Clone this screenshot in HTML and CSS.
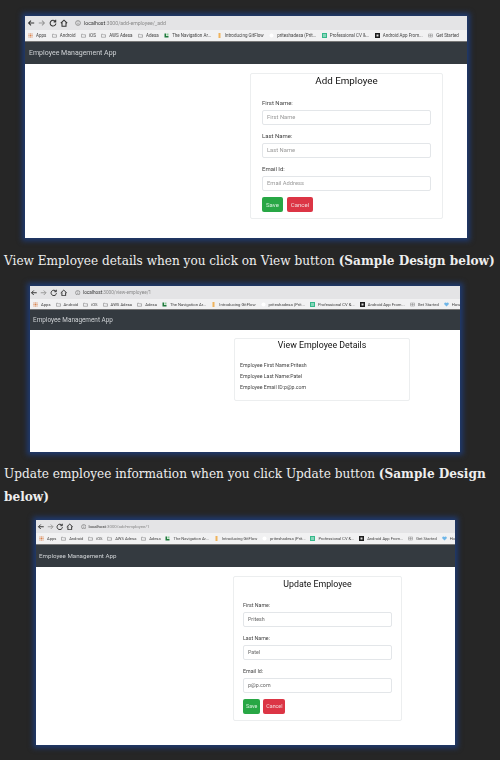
FILE: index.html
```html
<!DOCTYPE html>
<html lang="en">
<head>
  <meta charset="UTF-8">
  <title>Employee Management App</title>
  <link rel="stylesheet" href="styles.css">
</head>
<body>

  <svg class="defs" width="0" height="0">
    <symbol id="back" viewBox="0 0 10 10"><path d="M9 5H2M5 2L2 5l3 3" fill="none" stroke="currentColor" stroke-width="1.3"/></symbol>
    <symbol id="forward" viewBox="0 0 10 10"><path d="M1 5h7M5 2l3 3-3 3" fill="none" stroke="currentColor" stroke-width="1.3"/></symbol>
    <symbol id="reload" viewBox="0 0 10 10"><path d="M8 3.2A3.6 3.6 0 1 0 8.6 5.6M8.4 1v2.6H5.8" fill="none" stroke="currentColor" stroke-width="1.3"/></symbol>
    <symbol id="home" viewBox="0 0 10 10"><path d="M1 5.2L5 1.5l4 3.7M2.5 4.5V9h5V4.5" fill="none" stroke="currentColor" stroke-width="1.3"/></symbol>
    <symbol id="info" viewBox="0 0 10 10"><circle cx="5" cy="5" r="4" fill="none" stroke="currentColor"/><path d="M5 4.5v3M5 2.5v1" stroke="currentColor"/></symbol>
    <symbol id="apps" viewBox="0 0 10 10"><path d="M1 1h2v2H1zM4 1h2v2H4zM7 1h2v2H7zM1 4h2v2H1zM4 4h2v2H4zM7 4h2v2H7zM1 7h2v2H1zM4 7h2v2H4zM7 7h2v2H7z" fill="#d9814a"/></symbol>
    <symbol id="folder" viewBox="0 0 10 10"><path d="M1 2.5h3l1 1h4v5H1z" fill="none" stroke="#666" stroke-width="0.9"/></symbol>
    <symbol id="nav" viewBox="0 0 10 10"><path d="M1 1h3v5h5v3H1z" fill="#1f7a3c"/><path d="M5 1h4v4H5z" fill="#8ccf9b"/></symbol>
    <symbol id="flow" viewBox="0 0 10 10"><path d="M3 0h4v10H3z" fill="#efb35c"/></symbol>
    <symbol id="dot" viewBox="0 0 10 10"><circle cx="5" cy="5" r="4" fill="#fff"/></symbol>
    <symbol id="cv" viewBox="0 0 10 10"><path d="M0 0h10v10H0z" fill="#35b88a"/><path d="M2 3h6M2 5h6M2 7h6" stroke="#d8f3e8"/></symbol>
    <symbol id="app" viewBox="0 0 10 10"><path d="M0 0h10v10H0z" fill="#1d1d1d"/><path d="M3 3h4v4H3z" fill="#ddd"/></symbol>
    <symbol id="grid" viewBox="0 0 10 10"><path d="M1 2h8v6H1zM1 5h8M5 2v6" fill="none" stroke="#777" stroke-width="0.8"/></symbol>
    <symbol id="heart" viewBox="0 0 10 10"><path d="M5 9L1 5a2.4 2.4 0 0 1 4-3 2.4 2.4 0 0 1 4 3z" fill="#6fb6e8"/></symbol>
  </svg>

  <section class="shot shot-add">
    <div class="browser">
      <div class="toolbar">
        <svg class="tool"><use href="#back"/></svg>
        <svg class="tool muted"><use href="#forward"/></svg>
        <svg class="tool"><use href="#reload"/></svg>
        <svg class="tool"><use href="#home"/></svg>
        <svg class="tool info"><use href="#info"/></svg>
        <span class="url">localhost<span class="url-rest">:3000/add-employee/_add</span></span>
      </div>
      <div class="bookmarks">
        <span class="mark"><svg><use href="#apps"/></svg>Apps</span>
        <span class="mark"><svg><use href="#folder"/></svg>Android</span>
        <span class="mark"><svg><use href="#folder"/></svg>iOS</span>
        <span class="mark"><svg><use href="#folder"/></svg>AWS Adesa</span>
        <span class="mark"><svg><use href="#folder"/></svg>Adesa</span>
        <span class="mark"><svg><use href="#nav"/></svg>The Navigation Ar...</span>
        <span class="mark"><svg><use href="#flow"/></svg>Introducing GitFlow</span>
        <span class="mark"><svg><use href="#dot"/></svg>priteshadesa (Prit...</span>
        <span class="mark"><svg><use href="#cv"/></svg>Professional CV &amp;...</span>
        <span class="mark"><svg><use href="#app"/></svg>Android App From...</span>
        <span class="mark"><svg><use href="#grid"/></svg>Get Started</span>
      </div>
    </div>
    <div class="navbar">Employee Management App</div>
    <div class="page">
      <div class="card form-card">
        <h3>Add Employee</h3>
        <label>First Name:</label>
        <div class="input placeholder">First Name</div>
        <label>Last Name:</label>
        <div class="input placeholder">Last Name</div>
        <label>Email Id:</label>
        <div class="input placeholder">Email Address</div>
        <div class="actions">
          <span class="btn btn-save">Save</span>
          <span class="btn btn-cancel">Cancel</span>
        </div>
      </div>
    </div>
  </section>

  <p class="caption caption-view">View Employee details when you click on View button <strong>(Sample Design below)</strong></p>

  <section class="shot shot-view">
    <div class="browser">
      <div class="toolbar">
        <svg class="tool"><use href="#back"/></svg>
        <svg class="tool muted"><use href="#forward"/></svg>
        <svg class="tool"><use href="#reload"/></svg>
        <svg class="tool"><use href="#home"/></svg>
        <svg class="tool info"><use href="#info"/></svg>
        <span class="url">localhost<span class="url-rest">:3000/view-employee/1</span></span>
      </div>
      <div class="bookmarks">
        <span class="mark"><svg><use href="#apps"/></svg>Apps</span>
        <span class="mark"><svg><use href="#folder"/></svg>Android</span>
        <span class="mark"><svg><use href="#folder"/></svg>iOS</span>
        <span class="mark"><svg><use href="#folder"/></svg>AWS Adesa</span>
        <span class="mark"><svg><use href="#folder"/></svg>Adesa</span>
        <span class="mark"><svg><use href="#nav"/></svg>The Navigation Ar...</span>
        <span class="mark"><svg><use href="#flow"/></svg>Introducing GitFlow</span>
        <span class="mark"><svg><use href="#dot"/></svg>priteshadesa (Prit...</span>
        <span class="mark"><svg><use href="#cv"/></svg>Professional CV &amp;...</span>
        <span class="mark"><svg><use href="#app"/></svg>Android App From...</span>
        <span class="mark"><svg><use href="#grid"/></svg>Get Started</span>
        <span class="mark"><svg><use href="#heart"/></svg>How To Use</span>
      </div>
    </div>
    <div class="navbar">Employee Management App</div>
    <div class="page">
      <div class="card view-card">
        <h3>View Employee Details</h3>
        <p>Employee First Name:Pritesh</p>
        <p>Employee Last Name:Patel</p>
        <p>Employee Email ID:p@p.com</p>
      </div>
    </div>
  </section>

  <p class="caption caption-update">Update employee information when you click Update button <strong>(Sample Design below)</strong></p>

  <section class="shot shot-update">
    <div class="browser">
      <div class="toolbar">
        <svg class="tool"><use href="#back"/></svg>
        <svg class="tool muted"><use href="#forward"/></svg>
        <svg class="tool"><use href="#reload"/></svg>
        <svg class="tool"><use href="#home"/></svg>
        <svg class="tool info"><use href="#info"/></svg>
        <span class="url">localhost<span class="url-rest">:3000/add-employee/1</span></span>
      </div>
      <div class="bookmarks">
        <span class="mark"><svg><use href="#apps"/></svg>Apps</span>
        <span class="mark"><svg><use href="#folder"/></svg>Android</span>
        <span class="mark"><svg><use href="#folder"/></svg>iOS</span>
        <span class="mark"><svg><use href="#folder"/></svg>AWS Adesa</span>
        <span class="mark"><svg><use href="#folder"/></svg>Adesa</span>
        <span class="mark"><svg><use href="#nav"/></svg>The Navigation Ar...</span>
        <span class="mark"><svg><use href="#flow"/></svg>Introducing GitFlow</span>
        <span class="mark"><svg><use href="#dot"/></svg>priteshadesa (Prit...</span>
        <span class="mark"><svg><use href="#cv"/></svg>Professional CV &amp;...</span>
        <span class="mark"><svg><use href="#app"/></svg>Android App From...</span>
        <span class="mark"><svg><use href="#grid"/></svg>Get Started</span>
        <span class="mark"><svg><use href="#heart"/></svg>How To Use</span>
      </div>
    </div>
    <div class="navbar">Employee Management App</div>
    <div class="page">
      <div class="card form-card">
        <h3>Update Employee</h3>
        <label>First Name:</label>
        <div class="input">Pritesh</div>
        <label>Last Name:</label>
        <div class="input">Patel</div>
        <label>Email Id:</label>
        <div class="input">p@p.com</div>
        <div class="actions">
          <span class="btn btn-save">Save</span>
          <span class="btn btn-cancel">Cancel</span>
        </div>
      </div>
    </div>
  </section>

</body>
</html>
```

FILE: styles.css
```css
html, body {
  height: 760px;
  overflow: hidden;
}

body {
  margin: 0;
  padding-top: 16px;
  background-color: #262626;
  font-family: Roboto, sans-serif;
}

.defs {
  display: block;
  height: 0;
}

.caption {
  margin: 0;
  padding-left: 4px;
  color: #eee;
  font-family: "DejaVu Serif", serif;
  font-size: 12.1px;
  line-height: 23px;
}

.caption-view {
  margin-top: 12px;
  white-space: nowrap;
}

.caption-update {
  margin-top: 11px;
}

.shot {
  display: flex;
  flex-direction: column;
  box-shadow: 0 0 5px 3px #1f3a70;
  overflow: hidden;
  filter: blur(0.4px);
}

.shot-add {
  width: 442px;
  height: 222px;
  margin-left: 25px;
}

.shot-view {
  width: 430px;
  height: 166px;
  margin-top: 13px;
  margin-left: 30px;
}

.shot-update {
  width: 419px;
  height: 225px;
  margin-top: 11px;
  margin-left: 36px;
}

/* browser chrome, one size for each screenshot */
.browser {
  flex: none;
  background-color: #e4e4e6;
  color: #333;
}

.toolbar {
  display: flex;
  align-items: center;
  gap: 3px;
  height: 14px;
  padding-left: 2px;
}

.tool {
  width: 8px;
  height: 8px;
}

.muted {
  color: #999;
}

.info {
  margin-left: 4px;
  width: 6px;
  height: 6px;
  color: #666;
}

.url {
  font-size: 5.2px;
  color: #333;
}

.url-rest {
  color: #888;
}

.bookmarks {
  display: flex;
  align-items: center;
  gap: 5.5px;
  height: 12px;
  padding-left: 3px;
  background-color: #f1f1f2;
  border-bottom: 1px solid #777;
  box-sizing: border-box;
  font-size: 4.5px;
  color: #444;
  white-space: nowrap;
  overflow: hidden;
}

.mark {
  display: flex;
  align-items: center;
  gap: 3px;
}

.mark svg {
  width: 5px;
  height: 5px;
}

.navbar {
  flex: none;
  height: 22px;
  padding-left: 4px;
  background-color: #343a40;
  color: #cfd2d5;
  font-size: 7px;
  line-height: 22px;
}

.shot-view .toolbar {
  height: 13px;
  gap: 2.5px;
  padding-left: 0;
}

.shot-view .tool,
.shot-update .tool {
  width: 7.5px;
  height: 7.5px;
}

.shot-view .info,
.shot-update .info {
  margin-left: 5px;
  width: 5.5px;
  height: 5.5px;
}

.shot-view .bookmarks {
  height: 11px;
  gap: 5px;
  font-size: 4.2px;
}

.shot-view .url {
  font-size: 4.7px;
}

.shot-view .navbar {
  height: 20px;
  line-height: 20px;
  padding-left: 3px;
  font-size: 6.4px;
}

.shot-update .toolbar {
  height: 13px;
  gap: 2.2px;
  padding-left: 1px;
}

.shot-update .bookmarks {
  gap: 4.8px;
  font-size: 4.1px;
}

.shot-update .url {
  font-size: 4.3px;
}

.shot-update .navbar {
  padding-left: 3px;
  font-size: 6.2px;
}

.page {
  flex: 1;
  background-color: #fff;
  color: #333;
}

.card {
  border: 1px solid #eceeef;
  border-radius: 2px;
  box-sizing: border-box;
}

.card h3 {
  margin: 0;
  font-size: 9.8px;
  font-weight: 400;
  line-height: 14px;
  text-align: center;
  color: #111;
}

.form-card label {
  display: block;
  font-size: 6px;
  line-height: 8px;
  color: #444;
}

.input {
  height: 15px;
  margin-top: 3px;
  margin-bottom: 7px;
  padding-left: 4px;
  border: 1px solid #e3e6e9;
  border-radius: 2px;
  box-sizing: border-box;
  font-size: 5.8px;
  line-height: 13px;
  color: #666;
}

.placeholder {
  color: #999;
}

.actions {
  display: flex;
  gap: 4px;
  margin-top: -1px;
}

.btn {
  height: 15px;
  padding: 0 4px;
  border-radius: 2px;
  color: #f4d9dc;
  font-size: 6px;
  line-height: 15px;
}

.btn-save {
  background-color: #28a745;
  color: #d6f0dc;
}

.btn-cancel {
  background-color: #dc3545;
}

.shot-add .form-card {
  width: 193px;
  height: 146px;
  margin-top: 9px;
  margin-left: 225px;
  padding: 0 11px;
}

.shot-add .form-card h3 {
  margin-bottom: 11px;
}

.shot-update .form-card {
  width: 169px;
  height: 145px;
  margin-top: 9px;
  margin-left: 197px;
  padding: 0 9px;
}

.shot-update .form-card h3 {
  margin-bottom: 10px;
  font-size: 8.8px;
}

.shot-update .form-card label,
.shot-update .input {
  font-size: 5.3px;
}

.shot-update .btn {
  padding: 0 3px;
  font-size: 5.3px;
}

.shot-update .actions {
  gap: 3px;
}

.view-card {
  width: 176px;
  height: 63px;
  margin-top: 8px;
  margin-left: 204px;
  padding: 0 5px;
}

.view-card h3 {
  margin-bottom: 9px;
  font-size: 8.8px;
  line-height: 13px;
}

.view-card p {
  margin: 0 0 3px;
  font-size: 5.2px;
  line-height: 8px;
  color: #444;
}
```
